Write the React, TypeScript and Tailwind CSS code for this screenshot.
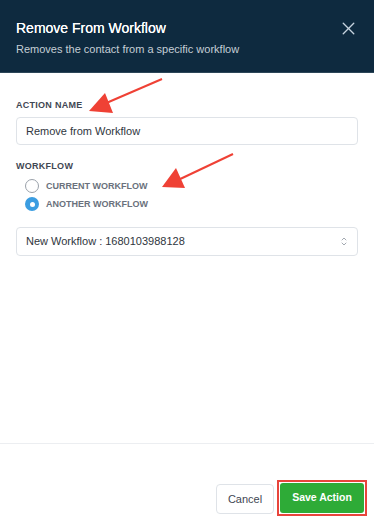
import React from "react";
import { X } from "lucide-react";

export default function App() {
  return (
    <div
      className="relative w-[374px] h-[523px] bg-white flex flex-col overflow-hidden"
      style={{ fontFamily: "'Liberation Sans', Arial, sans-serif" }}
    >
      <div className="h-[73px] bg-[#0e2a3f] border-b border-[#2c4658] pl-4 pr-[15px] pt-[18px] flex justify-between">
        <div>
          <div className="text-[14px] leading-5 text-white [text-shadow:0_0_0.4px_#ffffff]">Remove From Workflow</div>
          <div className="mt-[3px] text-[11px] leading-4 text-[#c5ced6]">Removes the contact from a specific workflow</div>
        </div>
        <X className="text-[#c6d3de]" size={21} strokeWidth={1.6} />
      </div>

      <div className="flex-1 px-4 pt-[26px]">
        <div className="text-[9px] leading-3 font-bold tracking-[0.03em] text-[#3f4753]">ACTION NAME</div>
        <div className="mt-[6px] h-[28px] border border-[#dfe3e8] rounded-[4px] px-[9px] flex items-center text-[11px] text-[#2f3640]">
          Remove from Workflow
        </div>

        <div className="mt-[15px] text-[9px] leading-3 font-bold tracking-[0.03em] text-[#3f4753]">WORKFLOW</div>
        <div className="mt-[7px] pl-[9px] flex flex-col gap-[4px]">
          <div className="flex items-center gap-[7px] h-[14px]">
            <div className="w-[14px] h-[14px] rounded-full border border-[#9aa1aa] bg-white" />
            <span className="text-[9px] leading-none font-bold text-[#6a717c]">CURRENT WORKFLOW</span>
          </div>
          <div className="flex items-center gap-[7px] h-[14px]">
            <div className="w-[14px] h-[14px] rounded-full bg-[#3b9de1] flex items-center justify-center">
              <div className="w-[5px] h-[5px] rounded-full bg-white" />
            </div>
            <span className="text-[9px] leading-none font-bold text-[#6a717c]">ANOTHER WORKFLOW</span>
          </div>
        </div>

        <div className="mt-[16px] h-[29px] border border-[#dfe3e8] rounded-[4px] pl-[9px] pr-[10px] flex items-center justify-between text-[11px] text-[#2f3640]">
          <span>New Workflow : 1680103988128</span>
          <svg width="6" height="11" viewBox="0 0 6 11" fill="none" stroke="#a3a9b1" strokeWidth="1" strokeLinecap="round" strokeLinejoin="round">
            <polyline points="1,4 3,2 5,4" />
            <polyline points="1,7 3,9 5,7" />
          </svg>
        </div>
      </div>

      <div className="h-[80px] border-t border-[#eceef1] flex justify-end items-start pt-[36px] pr-[7px] gap-[3px]">
        <button className="mt-[4px] h-[30px] w-[58px] rounded-[4px] border border-[#dfe3e8] bg-white text-[11px] text-[#3f4753]">
          Cancel
        </button>
        <div className="border-2 border-[#e8453c] p-[1px]">
          <button className="h-[30px] w-[84px] rounded-[3px] bg-[#2eab37] text-[10.5px] font-bold text-white">
            Save Action
          </button>
        </div>
      </div>

      <svg className="absolute left-0 top-0 pointer-events-none" width="374" height="523">
        <line x1="162" y1="79" x2="104" y2="104" stroke="#ef4135" strokeWidth="2" />
        <polygon points="89,111 105,93 113,113" fill="#ef4135" />
        <line x1="233" y1="154" x2="176" y2="181" stroke="#ef4135" strokeWidth="2" />
        <polygon points="162,187 176,168 185,188" fill="#ef4135" />
      </svg>
    </div>
  );
}
